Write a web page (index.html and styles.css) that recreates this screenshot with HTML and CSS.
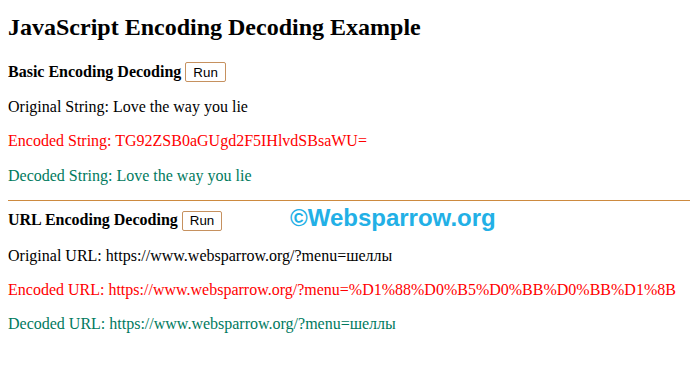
FILE: index.html
```html
<!DOCTYPE html>
<html>
<head>
<meta charset="utf-8">
<title>JavaScript Encoding Decoding Example</title>
<link rel="stylesheet" href="styles.css">
</head>
<body class="page">
<h2 class="title">JavaScript Encoding Decoding Example</h2>
<div class="section"><b>Basic Encoding Decoding</b> <button class="run">Run</button></div>
<p class="line">Original String: Love the way you lie</p>
<p class="line encoded">Encoded String: TG92ZSB0aGUgd2F5IHlvdSBsaWU=</p>
<p class="line decoded">Decoded String: Love the way you lie</p>
<hr class="divider">
<div class="section"><b>URL Encoding Decoding</b> <button class="run">Run</button></div>
<p class="line">Original URL: https://www.websparrow.org/?menu=шеллы</p>
<p class="line encoded">Encoded URL: https://www.websparrow.org/?menu=%D1%88%D0%B5%D0%BB%D0%BB%D1%8B</p>
<p class="line decoded">Decoded URL: https://www.websparrow.org/?menu=шеллы</p>
<div class="watermark">©Websparrow.org</div>
</body>
</html>
```
FILE: styles.css
```css
html, body {
  background: #ffffff;
}
.page {
  margin: 0 0 0 8px;
  font-family: "Liberation Serif", "Times New Roman", serif;
  font-size: 16px;
  color: #000000;
}
.title {
  font-size: 24px;
  font-weight: bold;
  margin: 13.6px 0 19.92px 0;
}
.section {
  margin: 0;
  line-height: 21px;
}
.line {
  margin: 16px 0;
  line-height: 1.15;
}
.encoded {
  color: #ff0000;
}
.decoded {
  color: #007a5e;
}
.run {
  font-family: "Liberation Sans", Arial, sans-serif;
  font-size: 13.33px;
  line-height: normal;
  box-sizing: border-box;
  height: 20px;
  background: #ffffff;
  color: #000000;
  border: 1px solid #c6915f;
  border-radius: 2px;
  padding: 0 7px;
  margin: 0;
  vertical-align: baseline;
}
.divider {
  border: 0;
  border-top: 1px solid #cd8a3f;
  height: 0;
  margin: -1px 0 8px 0;
}
.watermark {
  position: absolute;
  left: 290px;
  top: 204px;
  font-family: "Liberation Sans", Arial, sans-serif;
  font-weight: bold;
  font-size: 24px;
  color: #22b0e6;
}
```
